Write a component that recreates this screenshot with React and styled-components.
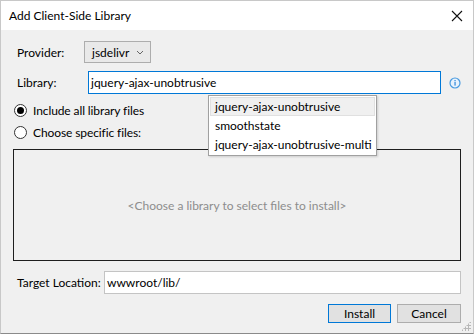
import React from "react";
import styled, { createGlobalStyle } from "styled-components";

const Global = createGlobalStyle`
  html, body { margin: 0; padding: 0; background: #f0f0f0; }
  body { font-family: Lato, "Noto Sans", sans-serif; font-size: 12px; color: #000; }
`;

const Window = styled.div`
  width: 474px;
  height: 334px;
  box-sizing: border-box;
  border: 1px solid #c8c8c8;
  border-bottom-color: #8a8a8a;
  display: flex;
  flex-direction: column;
  background: #f0f0f0;
  position: relative;
  overflow: hidden;
  white-space: nowrap;
`;

const TitleBar = styled.div`
  height: 29px;
  background: #fff;
  display: flex;
  align-items: center;
  justify-content: space-between;
  padding: 0 10px 0 8px;
  font-size: 12px;
  color: #000;
`;

const Body = styled.div`
  flex: 1;
  display: flex;
  flex-direction: column;
  padding: 11px 12px 0 12px;
  position: relative;
`;

const Row = styled.div`
  display: flex;
  align-items: center;
  margin-top: ${(p) => p.$mt || 0}px;
  height: ${(p) => p.$h || 22}px;
`;

const Label = styled.div`
  width: ${(p) => p.$w}px;
  padding-left: 4px;
  box-sizing: border-box;
  flex: none;
`;

const Select = styled.div`
  width: 67px;
  height: 22px;
  box-sizing: border-box;
  border: 1px solid #adadad;
  background: #e9e9e9;
  display: flex;
  align-items: center;
  justify-content: space-between;
  padding: 0 6px 0 7px;
`;

const Input = styled.div`
  flex: 1;
  height: 23px;
  box-sizing: border-box;
  border: 1px solid ${(p) => (p.$focus ? "#0078d7" : "#c4c4c4")};
  background: #fff;
  display: flex;
  align-items: center;
  padding-left: 2px;
`;

const InfoWrap = styled.div`
  margin-left: 8px;
  display: flex;
  align-items: center;
`;

const RadioRow = styled.label`
  display: flex;
  align-items: center;
  height: 16px;
  margin-top: ${(p) => p.$mt}px;
  padding-left: 1px;
  letter-spacing: -0.1px;
`;

const RadioCircle = styled.span`
  width: 13px;
  height: 13px;
  box-sizing: border-box;
  border-radius: 50%;
  border: 1px solid #333;
  background: #fff;
  display: flex;
  align-items: center;
  justify-content: center;
  margin-right: 6px;
  &::after {
    content: "";
    width: 7px;
    height: 7px;
    border-radius: 50%;
    background: ${(p) => (p.$checked ? "#000" : "transparent")};
  }
`;

const FilesBox = styled.div`
  margin-top: 9px;
  height: 112px;
  box-sizing: border-box;
  border: 1px solid #1e1e1e;
  display: flex;
  align-items: center;
  justify-content: center;
  color: #8d8d8d;
`;

const Buttons = styled.div`
  display: flex;
  justify-content: flex-end;
  gap: 6px;
  margin-top: 10px;
`;

const Button = styled.div`
  width: ${(p) => p.$w}px;
  height: 19px;
  box-sizing: border-box;
  border: 1px solid ${(p) => (p.$primary ? "#0078d7" : "#adadad")};
  background: #e1e1e1;
  display: flex;
  align-items: center;
  justify-content: center;
`;

const Dropdown = styled.div`
  position: absolute;
  left: 207px;
  top: 65px;
  width: 169px;
  box-sizing: border-box;
  border: 1px solid #a0a0a0;
  background: #fff;
  padding: 1px;
  box-shadow: 1px 1px 2px rgba(0,0,0,0.15);
  z-index: 2;
`;

const Item = styled.div`
  height: 19px;
  box-sizing: border-box;
  display: flex;
  align-items: center;
  padding-left: 4px;
  background: ${(p) => (p.$active ? "#f0f0f0" : "#fff")};
  border: 1px solid ${(p) => (p.$active ? "#e0e0e0" : "transparent")};
`;

const Grip = styled.div`
  position: absolute;
  right: 2px;
  bottom: 2px;
  width: 10px;
  height: 10px;
  background-image: radial-gradient(circle, #b8b8b8 1px, transparent 1.2px);
  background-size: 3px 3px;
  clip-path: polygon(100% 0, 100% 100%, 0 100%);
`;

export default function App() {
  return (
    <>
      <Global />
      <Window>
        <TitleBar>
          <span>Add Client-Side Library</span>
          <svg width="12" height="12" viewBox="0 0 12 12">
            <path d="M1 1L11 11M11 1L1 11" stroke="#111" strokeWidth="1.1" />
          </svg>
        </TitleBar>
        <Body>
          <Row $h={22}>
            <Label $w={71}>Provider:</Label>
            <Select>
              <span>jsdelivr</span>
              <svg width="8" height="5" viewBox="0 0 8 5">
                <path d="M1 1L4 4L7 1" fill="none" stroke="#666" strokeWidth="1" />
              </svg>
            </Select>
          </Row>
          <Row $h={23} $mt={8}>
            <Label $w={75}>Library:</Label>
            <Input $focus>jquery-ajax-unobtrusive</Input>
            <InfoWrap>
              <svg width="12" height="12" viewBox="0 0 12 12">
                <circle cx="6" cy="6" r="5" fill="#e8f2fc" stroke="#4a9be0" strokeWidth="1.2" />
                <rect x="5.4" y="5" width="1.3" height="3.6" fill="#3c8fdc" />
                <rect x="5.4" y="3" width="1.3" height="1.3" fill="#3c8fdc" />
              </svg>
            </InfoWrap>
          </Row>
          <RadioRow $mt={8}>
            <RadioCircle $checked />
            Include all library files
          </RadioRow>
          <RadioRow $mt={6}>
            <RadioCircle />
            Choose specific files:
          </RadioRow>
          <FilesBox>&lt;Choose a library to select files to install&gt;</FilesBox>
          <Row $h={23} $mt={10}>
            <Label $w={91}>Target Location:</Label>
            <Input>wwwroot/lib/</Input>
          </Row>
          <Buttons>
            <Button $w={63} $primary>Install</Button>
            <Button $w={64}>Cancel</Button>
          </Buttons>
          <Dropdown>
            <Item $active>jquery-ajax-unobtrusive</Item>
            <Item>smoothstate</Item>
            <Item>jquery-ajax-unobtrusive-multi</Item>
          </Dropdown>
        </Body>
        <Grip />
      </Window>
    </>
  );
}
